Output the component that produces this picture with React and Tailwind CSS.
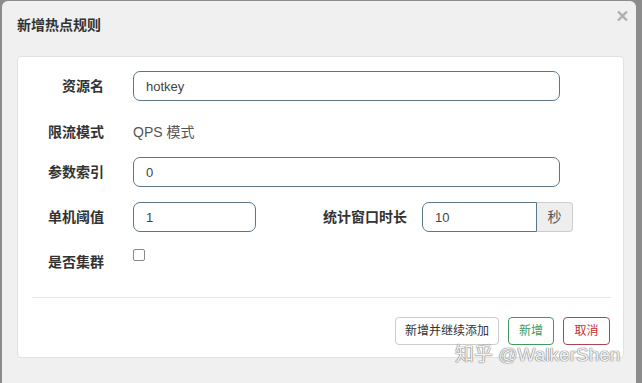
import React from 'react';

const Row = ({ label, children, className = '' }) => (
  <div className={`flex items-center h-[30px] ${className}`}>
    <label className="w-[86px] text-right text-[14px] font-bold text-[#333] leading-[30px]">{label}</label>
    <div className="ml-[29px] flex items-center h-full">{children}</div>
  </div>
);

const inputCls =
  'h-[30px] rounded-[7px] border border-[#5b7688] bg-white px-[12px] text-[13px] text-[#444] outline-none';

const App = () => {
  return (
    <div className="relative w-[642px] h-[383px] overflow-hidden bg-[#8c8c8c] font-['Liberation_Sans','Noto_Sans_CJK_SC',sans-serif]">
      {/* 弹窗 */}
      <div className="ml-[2px] mt-[1px] w-[634px] h-[400px] rounded-[6px] bg-[#f0f0f0]">
        {/* Header */}
        <div className="h-[55px] flex items-start justify-between pl-[15px] pr-[8px]">
          <h4 className="pt-[15px] text-[14px] font-bold leading-[18px] text-[#333]">新增热点规则</h4>
          <button className="mt-[9px] w-[12px] h-[12px] flex items-center justify-center">
            <svg width="11" height="10" viewBox="0 0 11 10">
              <path d="M1 0.5 L10 9.5 M10 0.5 L1 9.5" stroke="#b0b0b0" strokeWidth="2.4" />
            </svg>
          </button>
        </div>

        {/* 表单面板 */}
        <div className="mx-[15px] w-[607px] h-[302px] rounded-[4px] border border-[#e2e2e2] bg-white pt-[14px]">
          <Row label="资源名">
            <input readOnly value="hotkey" className={`${inputCls} w-[427px]`} />
          </Row>

          <Row label="限流模式" className="mt-[16px]">
            <span className="text-[14px] text-[#555]">QPS 模式</span>
          </Row>

          <Row label="参数索引" className="mt-[10px]">
            <input readOnly value="0" className={`${inputCls} w-[427px]`} />
          </Row>

          <div className="mt-[15px] flex items-center h-[30px]">
            <label className="w-[86px] text-right text-[14px] font-bold text-[#333]">单机阈值</label>
            <input readOnly value="1" className={`${inputCls} ml-[29px] w-[123px]`} />
            <label className="w-[151px] text-right text-[14px] font-bold text-[#333]">统计窗口时长</label>
            <div className="ml-[15px] flex h-[30px]">
              <input readOnly value="10" className={`${inputCls} w-[115px] rounded-r-none`} />
              <span className="w-[36px] flex items-center justify-center rounded-r-[4px] border border-l-0 border-[#ccc] bg-[#eee] text-[14px] text-[#555]">
                秒
              </span>
            </div>
          </div>

          <div className="mt-[15px] flex h-[30px]">
            <label className="w-[86px] text-right text-[14px] font-bold text-[#333] leading-[30px]">是否集群</label>
            <input type="checkbox" className="ml-[29px] mt-[2px] appearance-none w-[12px] h-[12px] rounded-[2px] border border-[#8a8a8a] bg-white" />
          </div>

          <div className="mt-[20px] ml-[14px] w-[579px] h-px bg-[#e5e5e5]" />

          <div className="mt-[19px] flex justify-end gap-[9px] pr-[13px]">
            <button className="h-[28px] w-[104px] rounded-[4px] border border-[#ccc] bg-white text-[12px] text-[#333]">
              新增并继续添加
            </button>
            <button className="h-[28px] w-[46px] rounded-[4px] border border-[#3f9a5c] bg-white text-[12px] text-[#3f9a5c]">
              新增
            </button>
            <button className="h-[28px] w-[47px] rounded-[4px] border border-[#b04552] bg-white text-[12px] text-[#c9302c]">
              取消
            </button>
          </div>
        </div>
      </div>

      {/* 水印 */}
      <div className="absolute left-[455px] top-[344px] text-[19px] leading-[22px] text-white/90 [text-shadow:0_0_1px_#777,0_0_1px_#777,0_0_1px_#999]">
        知乎 @WalkerShen
      </div>
    </div>
  );
};

export default App;
